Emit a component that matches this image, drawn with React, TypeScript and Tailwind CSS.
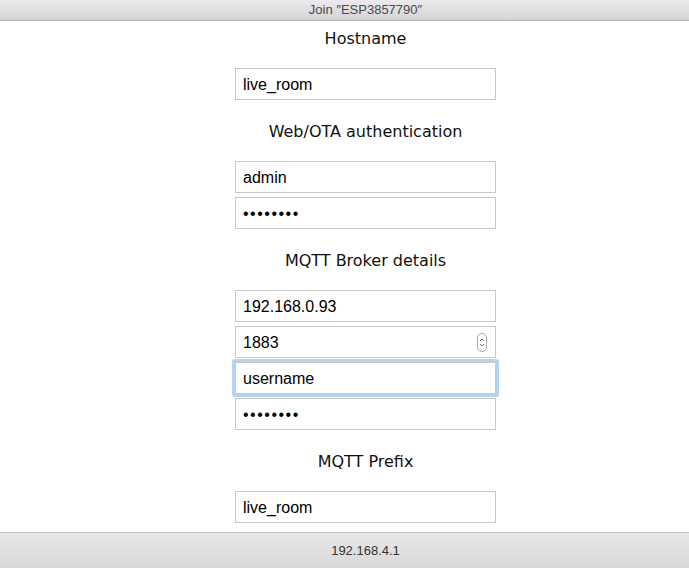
import React from "react";

const inputBase =
  "block w-[261px] h-[32px] border border-[#c8c8c8] bg-white pl-[7px] pr-[7px] pt-[2px] text-[16px] leading-[28px] text-black outline-none";

function Field({
  value,
  type = "text",
  focused = false,
  spinner = false,
}: {
  value: string;
  type?: string;
  focused?: boolean;
  spinner?: boolean;
}) {
  return (
    <div className="relative">
      <input
        readOnly
        type={type}
        value={value}
        className={
          inputBase +
          (type === "password" ? " tracking-[1.5px]" : "") +
          (focused
            ? " border-[#95bde6] rounded-[1px] shadow-[0_0_0_3px_#b4d4f4]"
            : "")
        }
        style={{ fontFamily: '"Liberation Sans", Arial, sans-serif' }}
      />
      {spinner && (
        <div className="absolute right-[9px] top-[7px] w-[10px] h-[19px] rounded-[5px] border border-[#a9a9a9] bg-white flex flex-col items-center justify-center">
          <svg width="6" height="13" viewBox="0 0 6 13" fill="none">
            <path d="M1 5 L3 3 L5 5" stroke="#6b6b6b" strokeWidth="1" />
            <path d="M1 8 L3 10 L5 8" stroke="#6b6b6b" strokeWidth="1" />
          </svg>
        </div>
      )}
    </div>
  );
}

function Heading({ children, first = false }: { children: React.ReactNode; first?: boolean }) {
  return (
    <h3
      className={
        "h-[20px] leading-[20px] text-[16px] text-[#111] mb-[19px] " +
        (first ? "mt-[8px]" : "mt-[22px]")
      }
      style={{ fontFamily: '"DejaVu Sans", Verdana, sans-serif' }}
    >
      {children}
    </h3>
  );
}

export default function App() {
  return (
    <div
      className="w-[689px] h-[568px] flex flex-col bg-white overflow-hidden"
      style={{ fontFamily: '"Liberation Sans", Arial, sans-serif' }}
    >
      <div className="h-[21px] shrink-0 border-b border-[#b3b1b3] bg-gradient-to-b from-[#eceaec] to-[#d5d3d5] pl-[42px] flex items-center justify-center">
        <span className="text-[13px] leading-[20px] text-[#4a4a4a]">Join ″ESP3857790″</span>
      </div>
      <div className="flex-1 pl-[42px] flex flex-col items-center">
        <Heading first>Hostname</Heading>
        <Field value="live_room" />

        <Heading>Web/OTA authentication</Heading>
        <div className="flex flex-col gap-[4px]">
          <Field value="admin" />
          <Field value="password" type="password" />
        </div>

        <Heading>MQTT Broker details</Heading>
        <div className="flex flex-col gap-[4px]">
          <Field value="192.168.0.93" />
          <Field value="1883" spinner />
          <Field value="username" focused />
          <Field value="password" type="password" />
        </div>

        <Heading>MQTT Prefix</Heading>
        <Field value="live_room" />
      </div>
      <div className="h-[36px] shrink-0 border-t border-[#c3c3c3] bg-gradient-to-b from-[#e7e7e7] to-[#d9d9d9] pl-[42px] flex items-center justify-center">
        <span className="text-[13px] text-[#333]">192.168.4.1</span>
      </div>
    </div>
  );
}
